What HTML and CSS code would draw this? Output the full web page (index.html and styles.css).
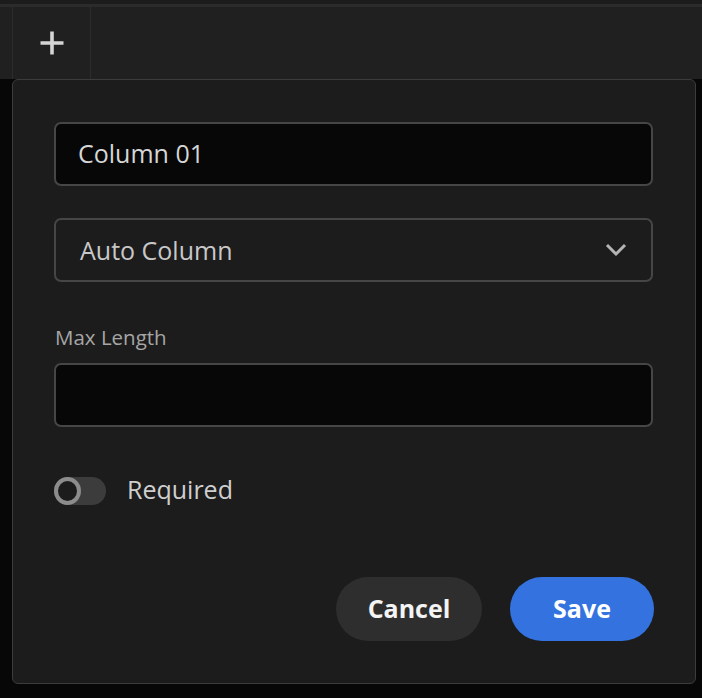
FILE: index.html
```html
<!DOCTYPE html>
<html>
<head>
<meta charset="utf-8">
<link rel="stylesheet" href="styles.css">
</head>
<body>
<div class="topbar">
  <div class="topline"></div>
  <div class="tabs">
    <div class="spacer"></div>
    <div class="addcell">
      <svg width="24" height="24" viewBox="0 0 24 24"><path d="M12 0.5V23.5M0.5 12H23.5" stroke="#d4d4d4" stroke-width="3.6" fill="none"/></svg>
    </div>
  </div>
</div>
<div class="stage">
  <div class="side"></div>
  <div class="popup">
    <div class="field input"><span class="value">Column 01</span></div>
    <div class="field select">
      <span class="value">Auto Column</span>
      <svg width="22" height="14" viewBox="0 0 22 14"><path d="M2 2L11 11L20 2" stroke="#b4b4b4" stroke-width="3" fill="none"/></svg>
    </div>
    <div class="group">
      <label class="label">Max Length</label>
      <div class="field input"></div>
    </div>
    <div class="toggle-row">
      <div class="toggle"><div class="knob"></div></div>
      <span class="toggle-label">Required</span>
    </div>
    <div class="actions">
      <button class="btn cancel">Cancel</button>
      <button class="btn save">Save</button>
    </div>
  </div>
</div>
</body>
</html>
```

FILE: styles.css
```css
* { box-sizing: border-box; }
html, body { margin: 0; padding: 0; }
body {
  background: #070707;
  width: 702px;
  height: 698px;
  overflow: hidden;
  font-family: "Open Sans", "Noto Sans", sans-serif;
}
.topbar { background: #202020; height: 79px; }
.topline { height: 7px; background: #1c1c1c; border-bottom: 3px solid #2b2b2b; }
.tabs { display: flex; height: 72px; }
.spacer { width: 13px; border-right: 1px solid #2c2c2c; }
.addcell {
  width: 78px;
  border-right: 1px solid #2c2c2c;
  display: flex;
  align-items: center;
  justify-content: center;
  padding-left: 1px;
}
.stage { display: flex; }
.side { width: 12px; }
.popup {
  width: 684px;
  height: 605px;
  background: #1c1c1c;
  border: 1px solid #3c3c3c;
  border-radius: 6px;
  padding: 42px 42px 42px 41px;
  display: flex;
  flex-direction: column;
}
.field {
  height: 64px;
  border: 2px solid #464646;
  border-radius: 7px;
  display: flex;
  align-items: center;
  color: #d6d6d6;
  font-size: 25px;
}
.value { line-height: 30px; padding-bottom: 3px; }
.input { background: #070707; padding-left: 22px; }
.select {
  margin-top: 32px;
  background: #1c1c1c;
  padding: 0 24px 0 24px;
  justify-content: space-between;
  color: #c8c8c8;
}
.select .value { padding-bottom: 1px; }
.group { margin-top: 42px; display: flex; flex-direction: column; }
.label { color: #a6a6a6; font-size: 20.5px; line-height: 26px; margin-bottom: 13px; padding-left: 1px; }
.toggle-row { margin-top: 50px; display: flex; align-items: center; gap: 21px; height: 28px; }
.toggle {
  width: 52px;
  height: 28px;
  border-radius: 14px;
  background: #3c3c3c;
  position: relative;
}
.knob {
  position: absolute;
  left: 0;
  top: 0;
  width: 27px;
  height: 28px;
  border-radius: 50%;
  border: 4px solid #8c8c8c;
  background: #1c1c1c;
}
.toggle-label { color: #cfcfcf; font-size: 25px; line-height: 25px; padding-bottom: 3px; }
.actions { margin-top: auto; margin-right: -1px; display: flex; justify-content: flex-end; gap: 28px; }
.btn {
  height: 64px;
  border: none;
  border-radius: 32px;
  font-family: inherit;
  font-weight: 700;
  font-size: 25px;
  color: #f4f4f4;
  padding: 0 0 3px;
}
.cancel { width: 146px; background: #2e2e2e; }
.save { width: 144px; background: #3473df; color: #fff; }
```
